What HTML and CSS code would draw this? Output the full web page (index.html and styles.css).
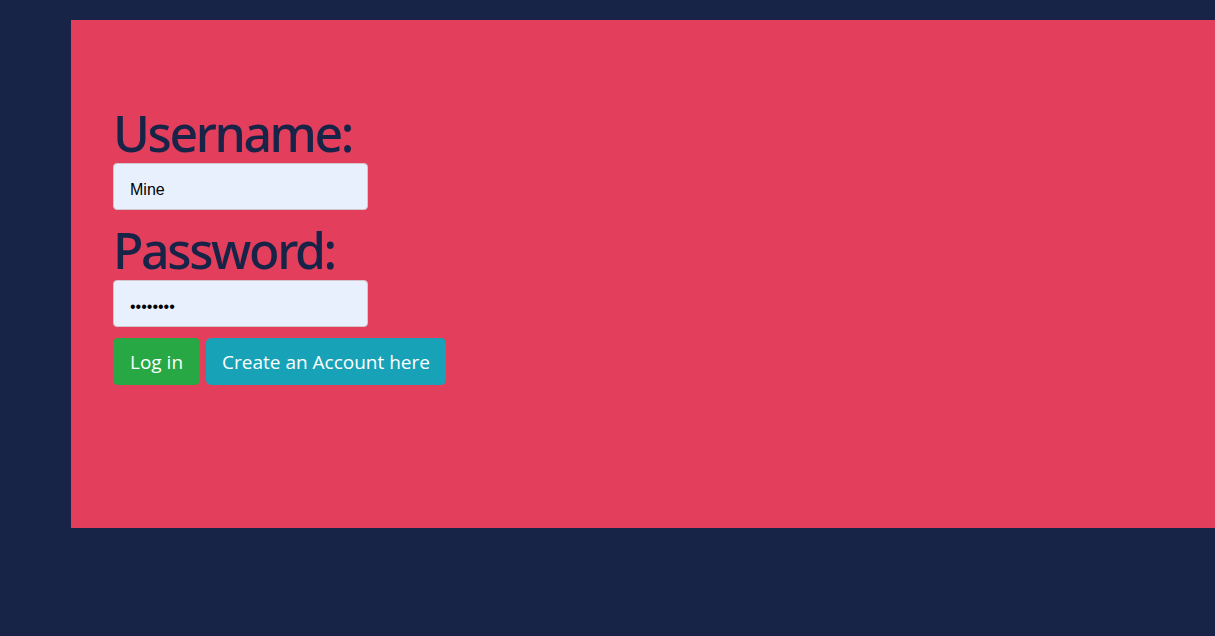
FILE: index.html
```html
<!DOCTYPE html>
<html lang="en">
<head>
<meta charset="utf-8">
<title>Log in</title>
<link rel="stylesheet" href="styles.css">
</head>
<body>
<main class="panel">
  <form class="login-form">
    <div class="form-group">
      <label class="field-label" for="username">Username:</label>
      <input class="field-input" id="username" type="text" value="Mine">
    </div>
    <div class="form-group">
      <label class="field-label" for="password">Password:</label>
      <input class="field-input" id="password" type="password" value="12345678">
    </div>
    <div class="actions">
      <button class="btn btn-login" type="button">Log in</button>
      <button class="btn btn-create" type="button">Create an Account here</button>
    </div>
  </form>
</main>
</body>
</html>
```
FILE: styles.css
```css
html, body {
  margin: 0;
  padding: 0;
}
body {
  background: #172448;
  height: 636px;
  overflow: hidden;
  font-family: "Open Sans", "Noto Sans", sans-serif;
}
.panel {
  margin: 20px 0 0 71px;
  height: 508px;
  background: #e33e5c;
  box-sizing: border-box;
  padding: 85px 0 0 42px;
}
.login-form {
  display: flex;
  flex-direction: column;
  align-items: flex-start;
}
.form-group {
  display: flex;
  flex-direction: column;
  align-items: flex-start;
  margin-bottom: 12px;
}
.form-group + .form-group {
  margin-bottom: 11px;
}
.field-label {
  display: block;
  font-family: "Noto Sans", "Open Sans", sans-serif;
  font-size: 50px;
  font-weight: 500;
  line-height: 56px;
  color: #172448;
  letter-spacing: -2.4px;
}
.field-input {
  margin-top: 2px;
  box-sizing: border-box;
  width: 255px;
  height: 47px;
  padding: 6px 16px 0;
  border: 1px solid #d3c6cc;
  border-radius: 4px;
  background: #e8f0fe;
  color: #000;
  font-family: "Liberation Sans", Arial, sans-serif;
  font-size: 16px;
  outline: none;
}
.actions {
  display: flex;
  gap: 6px;
}
.btn {
  box-sizing: border-box;
  height: 47px;
  padding: 0 16px;
  border: 0;
  border-radius: 5px;
  color: #fff;
  font-family: "Open Sans", "Noto Sans", sans-serif;
  font-size: 19px;
  cursor: pointer;
}
.btn-login {
  padding: 0 17px;
  background: #28a745;
}
.btn-create {
  background: #17a2b8;
}
```
